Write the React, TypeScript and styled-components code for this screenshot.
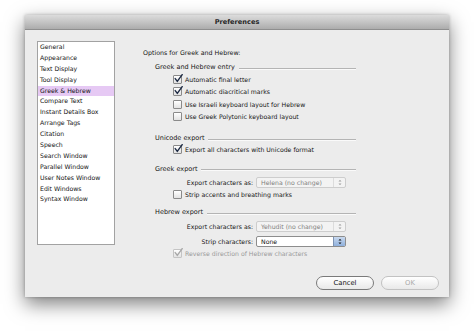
import styled, { createGlobalStyle } from 'styled-components';

const GlobalStyle = createGlobalStyle`
  html, body {
    margin: 0;
    padding: 0;
    background: #ffffff;
  }
  body {
    font-family: 'DejaVu Sans', 'Liberation Sans', sans-serif;
    font-size: 6.2px;
    color: #141414;
  }
`;

const Page = styled.div`
  width: 474px;
  height: 333px;
  padding: 15px 25px 0;
  box-sizing: border-box;
`;

const Window = styled.div`
  width: 424px;
  display: flex;
  flex-direction: column;
  background: #ececec;
  box-shadow: 0 7px 18px rgba(0, 0, 0, 0.5), 0 0 3px rgba(0, 0, 0, 0.25);
`;

const TitleBar = styled.div`
  height: 15px;
  display: flex;
  align-items: center;
  justify-content: center;
  background: linear-gradient(#dcdcdc, #acacac);
  border-bottom: 1px solid #8e8e8e;
  box-sizing: border-box;
  font-weight: bold;
  font-size: 6.6px;
  color: #262626;
`;

const Body = styled.div`
  height: 267px;
  box-sizing: border-box;
  display: grid;
  grid-template-columns: 78px 1fr;
  column-gap: 28px;
  padding: 11px 10px 7px 12px;
`;

const Sidebar = styled.ul`
  list-style: none;
  margin: 0;
  padding: 0;
  height: 204px;
  box-sizing: border-box;
  background: #ffffff;
  border: 1px solid #a2a2a2;
`;

const SidebarItem = styled.li<{ $active?: boolean }>`
  height: 10.9px;
  line-height: 10.9px;
  padding-left: 2px;
  white-space: nowrap;
  background: ${(p) => (p.$active ? '#e6c9f4' : 'transparent')};
`;

const Content = styled.div`
  display: flex;
  flex-direction: column;
  padding-top: 7px;
`;

const Heading = styled.div`
  height: 10px;
  line-height: 10px;
  font-size: 6.3px;
`;

const GroupHeader = styled.div<{ $gap: number }>`
  width: 213px;
  height: 10px;
  margin-top: ${(p) => p.$gap}px;
  padding-left: 12px;
  box-sizing: border-box;
  display: flex;
  align-items: center;
  gap: 4px;
  font-size: 6.5px;

  &::after {
    content: '';
    flex: 1;
    height: 0;
    margin-top: 3px;
    border-top: 1px solid #b4b4b4;
    border-bottom: 1px solid #fafafa;
  }
`;

const CheckRow = styled.label<{ $disabled?: boolean }>`
  height: 12.5px;
  display: flex;
  align-items: center;
  gap: 3px;
  padding-left: 30px;
  color: ${(p) => (p.$disabled ? '#9a9a9a' : '#141414')};
`;

const Box = styled.span<{ $disabled?: boolean }>`
  width: 7px;
  height: 7px;
  position: relative;
  border: 1px solid ${(p) => (p.$disabled ? '#c4c4c4' : '#8a8a8a')};
  border-radius: 1px;
  background: linear-gradient(#ffffff, #e2e2e2);

  svg {
    position: absolute;
    left: 0;
    top: -2px;
  }
`;

const PopupRow = styled.div<{ $gap: number }>`
  height: 12px;
  margin-top: ${(p) => p.$gap}px;
  display: grid;
  grid-template-columns: 110px 90px;
  column-gap: 3px;
  align-items: center;
`;

const PopupLabel = styled.span`
  text-align: right;
`;

const Popup = styled.div<{ $active?: boolean }>`
  height: 11px;
  box-sizing: border-box;
  display: flex;
  align-items: center;
  justify-content: space-between;
  padding-left: 4px;
  border: 1px solid ${(p) => (p.$active ? '#8d8d8d' : '#cdcdcd')};
  border-radius: 2px;
  background: ${(p) => (p.$active ? '#ffffff' : '#f3f3f3')};
  color: ${(p) => (p.$active ? '#111111' : '#7e7e7e')};
  overflow: hidden;
`;

const Arrows = styled.span<{ $active?: boolean }>`
  width: 11px;
  height: 100%;
  display: flex;
  align-items: center;
  justify-content: center;
  border-left: 1px solid ${(p) => (p.$active ? '#7d93b4' : '#dcdcdc')};
  background: ${(p) =>
    p.$active ? 'linear-gradient(#c9d9ef, #8fb0dc)' : 'transparent'};
`;

const Footer = styled.div`
  margin-top: auto;
  display: flex;
  justify-content: flex-end;
  gap: 7px;
`;

const Button = styled.button<{ $disabled?: boolean }>`
  width: 58px;
  height: 14px;
  padding: 0;
  border-radius: 7px;
  font-family: inherit;
  font-size: 6.8px;
  border: 1px solid ${(p) => (p.$disabled ? '#c2c2c2' : '#7a7a7a')};
  background: linear-gradient(#ffffff, #e9e9e9);
  color: ${(p) => (p.$disabled ? '#a8a8a8' : '#111111')};
`;

const sections = [
  'General',
  'Appearance',
  'Text Display',
  'Tool Display',
  'Greek & Hebrew',
  'Compare Text',
  'Instant Details Box',
  'Arrange Tags',
  'Citation',
  'Speech',
  'Search Window',
  'Parallel Window',
  'User Notes Window',
  'Edit Windows',
  'Syntax Window',
];

function Check({ checked, disabled, label }: { checked?: boolean; disabled?: boolean; label: string }) {
  return (
    <CheckRow $disabled={disabled}>
      <Box $disabled={disabled}>
        {checked && (
          <svg width='9' height='9' viewBox='0 0 9 9'>
            <path
              d='M1.2 4.6 L3.3 7.4 L8.2 0.6'
              fill='none'
              stroke={disabled ? '#a8a8a8' : '#1d2a44'}
              strokeWidth='1.4'
              strokeLinecap='round'
              strokeLinejoin='round'
            />
          </svg>
        )}
      </Box>
      {label}
    </CheckRow>
  );
}

function Select({ value, active }: { value: string; active?: boolean }) {
  const c = active ? '#1a1a1a' : '#a0a0a0';
  return (
    <Popup $active={active}>
      {value}
      <Arrows $active={active}>
        <svg width='4' height='7' viewBox='0 0 4 7'>
          <path d='M0.5 2.6 L2 0.8 L3.5 2.6 Z' fill={c} />
          <path d='M0.5 4.4 L2 6.2 L3.5 4.4 Z' fill={c} />
        </svg>
      </Arrows>
    </Popup>
  );
}

export default function App() {
  return (
    <Page>
      <GlobalStyle />
      <Window>
        <TitleBar>Preferences</TitleBar>
        <Body>
          <Sidebar>
            {sections.map((s) => (
              <SidebarItem key={s} $active={s === 'Greek & Hebrew'}>
                {s}
              </SidebarItem>
            ))}
          </Sidebar>
          <Content>
            <Heading>Options for Greek and Hebrew:</Heading>

            <GroupHeader $gap={4}>Greek and Hebrew entry</GroupHeader>
            <div style={{ height: 1 }} />
            <Check checked label='Automatic final letter' />
            <Check checked label='Automatic diacritical marks' />
            <Check label='Use Israeli keyboard layout for Hebrew' />
            <Check label='Use Greek Polytonic keyboard layout' />

            <GroupHeader $gap={10}>Unicode export</GroupHeader>
            <Check checked label='Export all characters with Unicode format' />

            <GroupHeader $gap={8}>Greek export</GroupHeader>
            <PopupRow $gap={3}>
              <PopupLabel>Export characters as:</PopupLabel>
              <Select value='Helena (no change)' />
            </PopupRow>
            <Check label='Strip accents and breathing marks' />

            <GroupHeader $gap={6}>Hebrew export</GroupHeader>
            <PopupRow $gap={3}>
              <PopupLabel>Export characters as:</PopupLabel>
              <Select value='Yehudit (no change)' />
            </PopupRow>
            <PopupRow $gap={3}>
              <PopupLabel>Strip characters:</PopupLabel>
              <Select value='None' active />
            </PopupRow>
            <Check checked disabled label='Reverse direction of Hebrew characters' />

            <Footer>
              <Button>Cancel</Button>
              <Button $disabled>OK</Button>
            </Footer>
          </Content>
        </Body>
      </Window>
    </Page>
  );
}
